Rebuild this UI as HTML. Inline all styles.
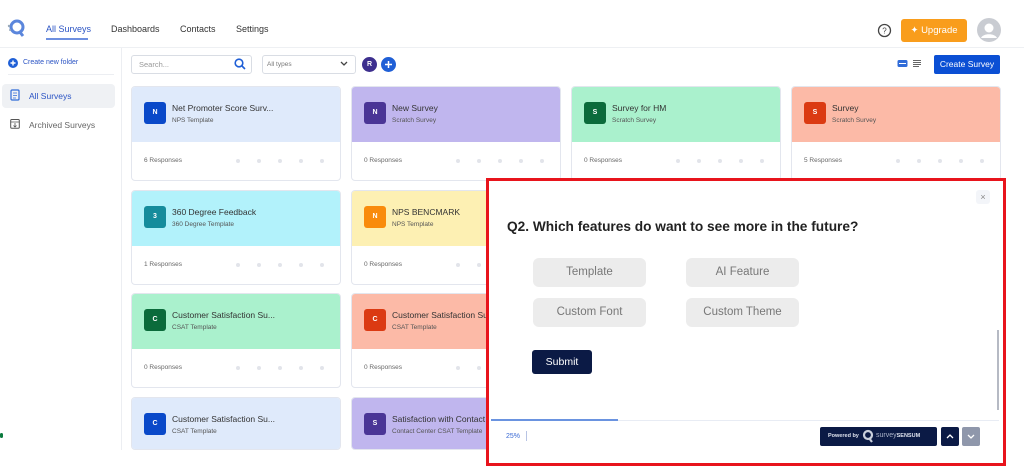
<!DOCTYPE html>
<html><head><meta charset="utf-8"><style>
*{box-sizing:border-box;margin:0;padding:0}
body{width:1024px;height:471px;overflow:hidden;background:#fff;font-family:"Liberation Sans",sans-serif;position:relative;color:#333}
.abs{position:absolute}
.nav{font-size:9px;color:#333;top:24px}
.card{position:absolute;width:210px;height:95px;border:1px solid #e3e6ee;border-radius:4px;background:#fff;overflow:hidden}
.card .h{height:55px;position:relative}
.card .ic{position:absolute;left:12px;top:15px;width:22px;height:22px;border-radius:3px;color:#fff;font-size:7px;font-weight:bold;text-align:center;line-height:22px}
.card .t{position:absolute;left:40px;top:16px;font-size:8.5px;color:#333;white-space:nowrap}
.card .s{position:absolute;left:40px;top:30px;font-size:6.5px;color:#555;white-space:nowrap}
.card .f{position:absolute;left:12px;top:70px;font-size:6.5px;color:#666}
.card .d{position:absolute;top:72px;width:4px;height:4px;border-radius:2px;background:#e2e4ea}
.opt{position:absolute;width:113px;height:29px;background:#ececec;border-radius:6px;color:#777;font-size:11.5px;text-align:center;line-height:29px}
</style></head><body>
<svg class="abs" style="left:6px;top:18px" width="20" height="20" viewBox="0 0 20 20"><circle cx="11" cy="9" r="6" fill="none" stroke="#5b86dc" stroke-width="3"/><path d="M13 13l4 5" stroke="#5b86dc" stroke-width="3"/><circle cx="3" cy="8" r="1.2" fill="#9ab"/><circle cx="4" cy="12" r="1" fill="#9ab"/></svg>
<div class="abs nav" style="left:46px;color:#2b54c4">All Surveys</div>
<div class="abs" style="left:46px;top:38px;width:42px;height:1.5px;background:#6d8fe0"></div>
<div class="abs nav" style="left:111px">Dashboards</div>
<div class="abs nav" style="left:180px">Contacts</div>
<div class="abs nav" style="left:236px">Settings</div>
<svg class="abs" style="left:877px;top:23px" width="15" height="15"><circle cx="7.5" cy="7.5" r="6" fill="none" stroke="#444" stroke-width="1.3"/><text x="7.5" y="10.5" font-size="8" text-anchor="middle" font-family="Liberation Sans" fill="#444">?</text></svg>
<div class="abs" style="left:901px;top:19px;width:66px;height:23px;background:#f99d1c;border-radius:3px;color:#fff;font-size:9.5px;line-height:23px;text-align:center">✦ Upgrade</div>
<svg class="abs" style="left:977px;top:18px" width="24" height="24"><circle cx="12" cy="12" r="12" fill="#c9ccd2"/><circle cx="12" cy="10" r="4.5" fill="#fff"/><path d="M4 20c2-5 14-5 16 0" fill="#fff"/></svg>
<div class="abs" style="left:0;top:47px;width:1024px;height:1px;background:#eef0f3"></div>
<div class="abs" style="left:121px;top:48px;width:1px;height:402px;background:#eceef2"></div>
<svg class="abs" style="left:8px;top:58px" width="10" height="10"><circle cx="5" cy="5" r="5" fill="#1f5fd6"/><path d="M5 2.5v5M2.5 5h5" stroke="#fff" stroke-width="1.4"/></svg>
<div class="abs" style="left:23px;top:59px;font-size:7px;color:#2b54c4">Create new folder</div>
<div class="abs" style="left:8px;top:74px;width:106px;height:1px;background:#eceef2"></div>
<div class="abs" style="left:2px;top:84px;width:113px;height:24px;background:#eff1f4;border-radius:4px"></div>
<svg class="abs" style="left:10px;top:89px" width="10" height="12"><rect x="1" y="1" width="8" height="10" rx="1" fill="none" stroke="#2f6bd8" stroke-width="1.2"/><path d="M3 4h4M3 6.5h4M3 9h3" stroke="#2f6bd8" stroke-width="0.8"/></svg>
<div class="abs" style="left:29px;top:91px;font-size:8.5px;color:#2b54c4">All Surveys</div>
<svg class="abs" style="left:10px;top:118px" width="10" height="11"><rect x="0.7" y="1.5" width="8.6" height="8.8" rx="1" fill="none" stroke="#555" stroke-width="1"/><path d="M1 4h8M5 5v4M3.5 7.5L5 9l1.5-1.5" stroke="#555" stroke-width="0.8" fill="none"/></svg>
<div class="abs" style="left:29px;top:120px;font-size:8.5px;color:#666">Archived Surveys</div>
<div class="abs" style="left:0;top:433px;width:3px;height:5px;background:#0b7a3e;border-radius:2px"></div>
<div class="abs" style="left:131px;top:55px;width:121px;height:19px;border:1px solid #d9dde4;border-radius:3px"></div>
<div class="abs" style="left:139px;top:60px;font-size:7.5px;color:#999">Search...</div>
<svg class="abs" style="left:234px;top:58px" width="12" height="12"><circle cx="5" cy="5" r="3.8" fill="none" stroke="#1f5fd6" stroke-width="1.6"/><path d="M8 8l3 3" stroke="#1f5fd6" stroke-width="1.6"/></svg>
<div class="abs" style="left:262px;top:55px;width:94px;height:19px;border:1px solid #d9dde4;border-radius:3px"></div>
<div class="abs" style="left:267px;top:61px;font-size:6.5px;color:#777">All types</div>
<svg class="abs" style="left:340px;top:61px" width="8" height="6"><path d="M1 1l3 3 3-3" stroke="#444" stroke-width="1.3" fill="none"/></svg>
<div class="abs" style="left:362px;top:57px;width:15px;height:15px;border-radius:8px;background:#3d2f8e;color:#fff;font-size:7px;text-align:center;line-height:15px;font-weight:bold">R</div>
<svg class="abs" style="left:381px;top:57px" width="15" height="15"><circle cx="7.5" cy="7.5" r="7.5" fill="#1f5fd6"/><path d="M7.5 4v7M4 7.5h7" stroke="#fff" stroke-width="1.5"/></svg>
<svg class="abs" style="left:897px;top:59px" width="28" height="10"><rect x="0.5" y="1" width="10" height="7" rx="1.5" fill="#2f6bd8"/><path d="M2 4.5h7" stroke="#fff"/><path d="M16 1.5h8M16 3.5h8M16 5.5h8M16 7.5h6" stroke="#666" stroke-width="1.1"/></svg>
<div class="abs" style="left:934px;top:55px;width:66px;height:19px;background:#0b4fd4;border-radius:2px;color:#fff;font-size:8.5px;text-align:center;line-height:19px">Create Survey</div>
<div id="cards"></div>
<script>
var C=[
[131,86,'#dfeafb','#0a49c9','N','Net Promoter Score Surv...','NPS Template','6'],
[351,86,'#c0b6ee','#4a3596','N','New Survey','Scratch Survey','0'],
[571,86,'#aaf1cd','#0b6b3b','S','Survey for HM','Scratch Survey','0'],
[791,86,'#fcbaa7','#db3a12','S','Survey','Scratch Survey','5'],
[131,190,'#b2f2fb','#158c9c','3','360 Degree Feedback','360 Degree Template','1'],
[351,190,'#fdf0b3','#f98b0c','N','NPS BENCMARK','NPS Template','0'],
[131,293,'#aaf1cd','#0b6b3b','C','Customer Satisfaction Su...','CSAT Template','0'],
[351,293,'#fcbaa7','#db3a12','C','Customer Satisfaction Su...','CSAT Template','0'],
[131,397,'#dfeafb','#0a49c9','C','Customer Satisfaction Su...','CSAT Template',''],
[351,397,'#c0b6ee','#4a3596','S','Satisfaction with Contact Center','Contact Center CSAT Template','']];
var h='';C.forEach(function(c){var ht=c[1]==397?53:95;
h+='<div class="card" style="left:'+c[0]+'px;top:'+c[1]+'px;height:'+ht+'px"><div class="h" style="background:'+c[2]+'"><div class="ic" style="background:'+c[3]+'">'+c[4]+'</div><div class="t">'+c[5]+'</div><div class="s">'+c[6]+'</div></div>';
if(c[7]){h+='<div class="f">'+c[7]+' Responses</div>';for(var i=0;i<5;i++)h+='<div class="d" style="left:'+(104+i*21)+'px"></div>';}
h+='</div>';});document.getElementById('cards').innerHTML=h;
</script>
<div class="abs" style="left:486px;top:178px;width:520px;height:288px;border:3.5px solid #e8141c;background:#fff"></div>
<div class="abs" style="left:976px;top:190px;width:14px;height:14px;border-radius:3px;background:#f3f5f9;color:#888;font-size:9px;text-align:center;line-height:14px">×</div>
<div class="abs" style="left:507px;top:219px;font-size:13.7px;font-weight:bold;color:#222">Q2. Which features do want to see more in the future?</div>
<div class="opt" style="left:533px;top:258px">Template</div>
<div class="opt" style="left:686px;top:258px">AI Feature</div>
<div class="opt" style="left:533px;top:298px">Custom Font</div>
<div class="opt" style="left:686px;top:298px">Custom Theme</div>
<div class="abs" style="left:532px;top:350px;width:60px;height:24px;background:#0b1a45;border-radius:3px;color:#fff;font-size:10.5px;text-align:center;line-height:24px">Submit</div>
<div class="abs" style="left:997px;top:330px;width:2px;height:80px;background:#b6bac4"></div>
<div class="abs" style="left:491px;top:420px;width:508px;height:1px;background:#e8ecf4"></div>
<div class="abs" style="left:491px;top:419px;width:127px;height:2px;background:#6a93e0"></div>
<div class="abs" style="left:506px;top:433px;font-size:7px;color:#3a6ad4">25%</div>
<div class="abs" style="left:526px;top:431px;width:1px;height:10px;background:#b8c4e4"></div>
<div class="abs" style="left:820px;top:427px;width:117px;height:19px;background:#0b1a45;border-radius:2px"></div>
<div class="abs" style="left:828px;top:433px;font-size:5.5px;color:#dfe3ee;font-weight:bold">Powered by</div>
<svg class="abs" style="left:862px;top:429px" width="12" height="14"><circle cx="6" cy="6" r="4" fill="none" stroke="#c9cfdc" stroke-width="2.2"/><path d="M7 9l3 4" stroke="#c9cfdc" stroke-width="2.2"/></svg>
<div class="abs" style="left:876px;top:432px;font-size:7px;color:#aab3c8">survey<b style="font-size:5.5px;color:#dfe3ee">SENSUM</b></div>
<div class="abs" style="left:941px;top:427px;width:18px;height:19px;background:#0b1a45;border-radius:2px"></div>
<svg class="abs" style="left:946px;top:433px" width="8" height="6"><path d="M1 5l3-3 3 3" stroke="#fff" stroke-width="1.3" fill="none"/></svg>
<div class="abs" style="left:962px;top:427px;width:18px;height:19px;background:#8f97ab;border-radius:2px"></div>
<svg class="abs" style="left:967px;top:434px" width="8" height="6"><path d="M1 1l3 3 3-3" stroke="#fff" stroke-width="1.3" fill="none"/></svg>
</body></html>
